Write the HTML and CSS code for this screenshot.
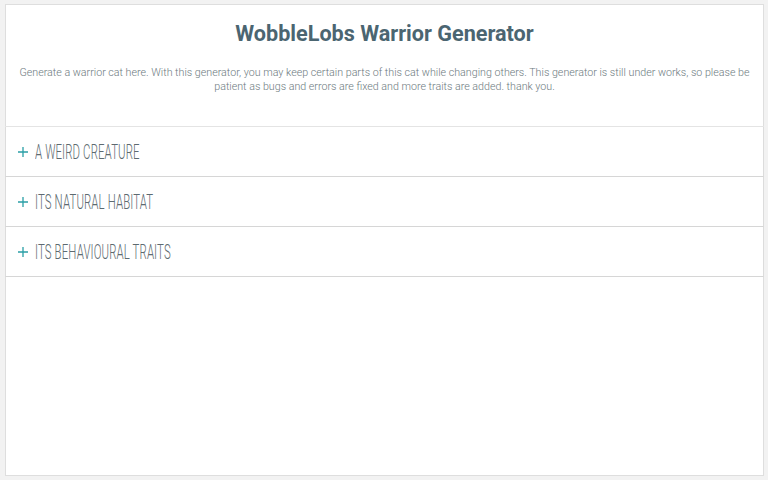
FILE: index.html
```html
<!DOCTYPE html>
<html>
<head>
<meta charset="utf-8">
<link rel="stylesheet" href="styles.css">
</head>
<body>
<div class="card">
  <header class="intro">
    <h1 class="title">WobbleLobs Warrior Generator</h1>
    <p class="desc">Generate a warrior cat here. With this generator, you may keep certain parts of this cat while changing others. This generator is still under works, so please be patient as bugs and errors are fixed and more traits are added. thank you.</p>
  </header>
  <div class="accordion">
    <div class="item">
      <svg class="plus" width="10" height="10" viewBox="0 0 10 10"><path d="M5 0V10M0 5H10" stroke="#2a9fa6" stroke-width="1.3"/></svg>
      <span class="label">A WEIRD CREATURE</span>
    </div>
    <div class="item">
      <svg class="plus" width="10" height="10" viewBox="0 0 10 10"><path d="M5 0V10M0 5H10" stroke="#2a9fa6" stroke-width="1.3"/></svg>
      <span class="label">ITS NATURAL HABITAT</span>
    </div>
    <div class="item">
      <svg class="plus" width="10" height="10" viewBox="0 0 10 10"><path d="M5 0V10M0 5H10" stroke="#2a9fa6" stroke-width="1.3"/></svg>
      <span class="label">ITS BEHAVIOURAL TRAITS</span>
    </div>
  </div>
</div>
</body>
</html>
```
FILE: styles.css
```css
html, body {
  margin: 0;
  padding: 0;
  background: #f2f2f2;
}
body {
  padding: 4px 4px 4px 5px;
  height: 480px;
  box-sizing: border-box;
  font-family: Roboto, "Liberation Sans", sans-serif;
}
.card {
  background: #fff;
  border: 1px solid #dedede;
  height: 100%;
  box-sizing: border-box;
  display: flex;
  flex-direction: column;
}
.intro {
  padding: 16px 8px 0 8px;
  height: 121px;
  box-sizing: border-box;
}
.title {
  margin: 0;
  text-align: center;
  font-size: 21.6px;
  font-weight: 700;
  color: #4b6571;
  line-height: 26px;
}
.desc {
  margin: 19px 0 0 0;
  text-align: center;
  font-size: 10.7px;
  font-weight: 300;
  line-height: 14px;
  color: #6d7a80;
}
.accordion {
  margin-right: -1px;
  margin-left: -1px;
  border-top: 1px solid #e4e4e4;
}
.item {
  height: 50px;
  box-sizing: border-box;
  border-bottom: 1px solid #d6d6d6;
  border-left: 1px solid #dcdcdc;
  border-right: 1px solid #dcdcdc;
  display: flex;
  align-items: center;
  padding-left: 12px;
  padding-top: 2px;
}
.plus {
  flex: none;
  margin-right: 7px;
  margin-top: -2px;
}
.label {
  display: inline-block;
  font-family: Roboto, "Liberation Sans", sans-serif;
  font-weight: 300;
  font-size: 19.5px;
  color: #5d6a70;
  transform: scaleX(0.585);
  transform-origin: left center;
  white-space: nowrap;
  letter-spacing: 0.2px;
}
```
